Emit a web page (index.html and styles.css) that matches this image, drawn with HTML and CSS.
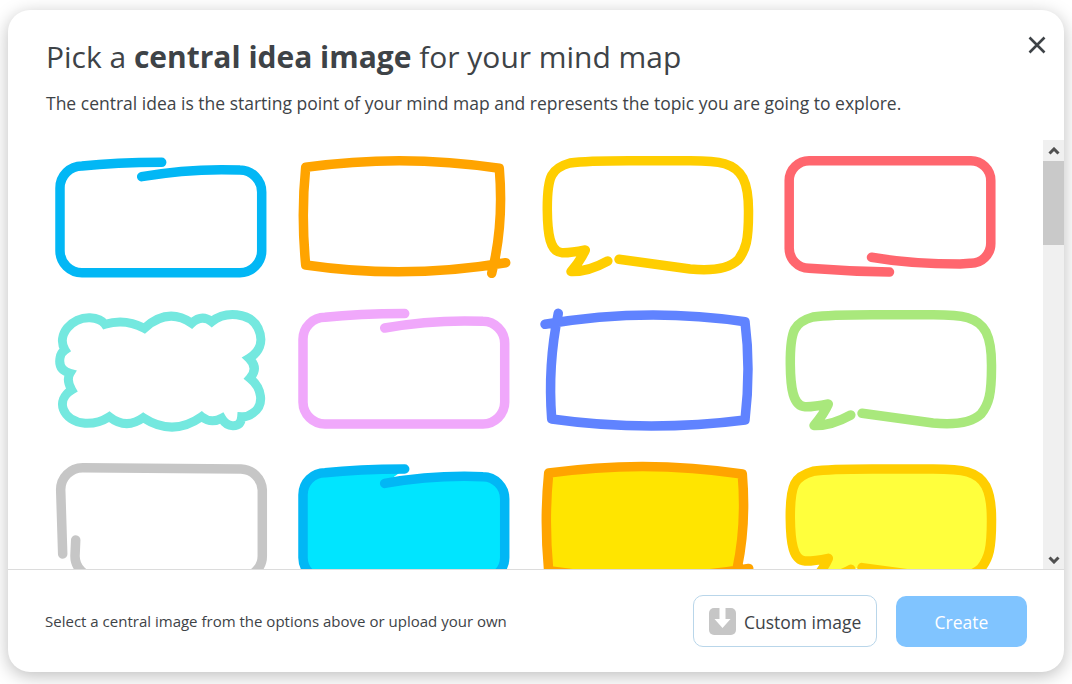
FILE: index.html
```html
<!DOCTYPE html>
<html lang="en">
<head>
<meta charset="utf-8">
<title>Pick a central idea image</title>
<link rel="stylesheet" href="styles.css">
</head>
<body>
<div class="dialog">
  <header class="head">
    <h1 class="title">Pick a <strong>central idea image</strong> for your mind map</h1>
    <p class="lead">The central idea is the starting point of your mind map and represents the topic you are going to explore.</p>
    <button class="close" aria-label="Close">
      <svg viewBox="0 0 20 20" width="20" height="20"><path d="M2.5 2.5L17.5 17.5M17.5 2.5L2.5 17.5"/></svg>
    </button>
  </header>
  <div class="picker">
    <div class="scroller">
      <div class="grid">
        <svg class="shape" viewBox="46 150 242 154"><path class="s-blue" d="M161.7 162.3Q115 162.5 82 166A22 22 0 0 0 60 188L60 251A22 22 0 0 0 82 272.7L240 272.7A22 22 0 0 0 261.7 251L261.7 192A22 22 0 0 0 240 170Q190 168 141.7 176.7"/></svg>
        <svg class="shape" viewBox="288 150 242 154"><path class="s-orange" d="M305.7 167.3Q403 153.6 499.3 168.3Q504 225 491.7 273.3M505.7 262.7Q405 279.6 305.7 265Q300.9 215 305.7 167.3"/></svg>
        <svg class="shape" viewBox="530 150 242 154"><path class="s-yellow" d="M607.8 261Q588 272 571 271.5Q581 260 585.3 250Q570 253 562 252.7C550 252 547.5 235 547.3 210C547 175 552 168 570 163C590 160 620 160.7 650 160.7L690 160.7C720 160.7 735 163 743 178C749 190 748.5 205 748.5 213C748.5 240 746 250 738 260C725 272 700 270 690 269L619 259.3"/></svg>
        <svg class="shape" viewBox="772 150 242 154"><path class="s-red" d="M871.5 257.3Q910 264 960 264L970 263.3A20 20 0 0 0 990.8 243L990.8 181A20 20 0 0 0 970 160.7L810 160.7A20 20 0 0 0 789.2 181L789.2 248A20 20 0 0 0 809 268.3Q850 271.5 889.5 272"/></svg>

        <svg class="shape" viewBox="46 304 242 154"><path class="s-teal" d="M65 350C56 335 72 317 90 317.7C96 318 102 320 105 324.3Q125 318 144.3 328.3Q168 307 191.7 323.3Q201.7 314 211.7 321.7C225 311 250 312 258 328C265 343 258 353 249 358.3Q259 368 250 378.3C262 388 265 405 253 413Q248 417 241.7 416.7Q241 426 232.7 425.7Q226 425.7 221.7 418.3Q211 424 201.7 416.7Q173 437 143.3 417.7Q126 430 109.3 416.7Q98 424 85 423.3C62 421 55 400 71.7 390Q66 380 70 373.3Q58 370 60 358Q60.5 353 65 350Z"/></svg>
        <svg class="shape" viewBox="288 304 242 154"><path class="s-pink" d="M404.7 313.6Q358 313.8 325 317.3A22 22 0 0 0 303 339.3L303 402.3A22 22 0 0 0 325 424L483 424A22 22 0 0 0 504.7 402.3L504.7 343.3A22 22 0 0 0 483 321.3Q433 319.3 384.7 328"/></svg>
        <svg class="shape" viewBox="530 304 242 154"><path class="s-indigo" d="M545 324.3Q645 307 745 321.7Q751 368 745 420Q647 432.5 551.7 419Q547.6 365 558.3 313.3"/></svg>
        <svg class="shape" viewBox="772 304 242 154"><path class="s-green" d="M850.8 415Q831 426 814 425.5Q824 414 828.3 404Q813 407 805 406.7C793 406 790.5 389 790.3 364C790 329 795 322 813 317C833 314 863 314.7 893 314.7L933 314.7C963 314.7 978 317 986 332C992 344 991.5 359 991.5 367C991.5 394 989 404 981 414C968 426 943 424 933 423L862 413.3"/></svg>

        <svg class="shape" viewBox="46 458 242 154"><path class="s-gray" d="M62.7 554L60.7 490A22 22 0 0 1 82.7 467.7L241 469A22 22 0 0 1 262.3 490L262.3 556A21 21 0 0 1 241 577L96 577A21 21 0 0 1 75 556L75.7 540"/></svg>
        <svg class="shape" viewBox="288 458 242 154"><path class="s-cyan" d="M404.7 469Q358 469.2 325 472.7A22 22 0 0 0 303 494.7L303 557.7A22 22 0 0 0 325 579.4L483 579.4A22 22 0 0 0 504.7 557.7L504.7 498.7A22 22 0 0 0 483 476.7Q433 474.7 384.7 483.4"/></svg>
        <svg class="shape" viewBox="530 458 242 154"><path class="f-gold" d="M548.7 473Q646 459.3 742.3 474Q747 530.7 737 570Q648 585.3 548.7 570.7Q543.9 520.7 548.7 473Z"/><path class="s-amber" d="M548.7 473Q646 459.3 742.3 474Q747 530.7 734.7 579M748.7 568.4Q648 585.3 548.7 570.7Q543.9 520.7 548.7 473"/></svg>
        <svg class="shape" viewBox="772 458 242 154"><path class="s-lemon" d="M850.8 569.3Q831 580.3 814 579.8Q824 568.3 828.3 558.3Q813 561.3 805 561C793 560.3 790.5 543.3 790.3 518.3C790 483.3 795 476.3 813 471.3C833 468.3 863 469 893 469L933 469C963 469 978 471.3 986 486.3C992 498.3 991.5 513.3 991.5 521.3C991.5 548.3 989 558.3 981 568.3C968 580.3 943 578.3 933 577.3L862 567.6"/></svg>
      </div>
    </div>
    <div class="scrollbar" aria-hidden="true">
      <div class="arrow">
        <svg viewBox="0 0 12 8" width="12" height="8"><path d="M1.5 6.5L6 2L10.5 6.5"/></svg>
      </div>
      <div class="track"><div class="thumb"></div></div>
      <div class="arrow arrow-down">
        <svg viewBox="0 0 12 8" width="12" height="8"><path d="M1.5 1.5L6 6L10.5 1.5"/></svg>
      </div>
    </div>
  </div>
  <footer class="foot">
    <span class="hint">Select a central image from the options above or upload your own</span>
    <div class="actions">
      <button class="btn-custom">
        <svg class="upload" viewBox="0 0 27 27" width="27" height="27"><rect width="27" height="27" rx="5"/><path d="M10.5 0H16.5V11H21.5L13.5 20L5.5 11H10.5Z"/></svg>
        <span class="btn-label">Custom image</span>
      </button>
      <button class="btn-create"><span class="btn-label">Create</span></button>
    </div>
  </footer>
</div>
</body>
</html>
```
FILE: styles.css
```css
* { box-sizing: border-box; }
html, body { height: 100%; }
body {
  margin: 0;
  padding: 10px 8px 12px;
  background: #fff;
  font-family: "Open Sans", "Liberation Sans", sans-serif;
  color: #3e4347;
  overflow: hidden;
}
.dialog {
  display: flex;
  flex-direction: column;
  height: 662px;
  background: #fff;
  border-radius: 22px;
  box-shadow: 0 4px 18px rgba(0, 0, 0, .26);
  overflow: hidden;
}
.head {
  position: relative;
  height: 130px;
  padding: 26px 38px 0;
}
.title {
  margin: 0;
  font-size: 29.98px;
  line-height: 42px;
  font-weight: 400;
}
.title strong { font-weight: 700; }
.lead {
  margin: 13px 0 0;
  font-size: 17.5px;
  line-height: 24px;
  white-space: nowrap;
}
.close {
  position: absolute;
  top: 25px;
  right: 17px;
  width: 20px;
  height: 20px;
  padding: 0;
  border: 0;
  background: none;
}
.close svg { display: block; fill: none; stroke: #3e4347; stroke-width: 2.6; }
.picker {
  display: flex;
  height: 429px;
}
.scroller {
  flex: 1;
  overflow: hidden;
  padding: 10px 0 0 38px;
}
.grid {
  display: grid;
  grid-template-columns: repeat(4, 242px);
  grid-auto-rows: 154px;
}
.shape {
  display: block;
  width: 242px;
  height: 154px;
  overflow: visible;
  fill: none;
  stroke-width: 9.5;
  stroke-linecap: round;
  stroke-linejoin: round;
}
.s-blue { stroke: #02b7f5; }
.s-orange { stroke: #ffa400; }
.s-yellow { stroke: #ffce00; }
.s-red { stroke: #ff666e; }
.s-teal { stroke: #74e8df; stroke-width: 9; stroke-linejoin: miter; }
.s-pink { stroke: #f0a8fb; }
.s-indigo { stroke: #6083ff; }
.s-green { stroke: #a9e87c; }
.s-gray { stroke: #c6c6c6; }
.s-cyan { stroke: #02b7f5; fill: #00e5ff; }
.f-gold { fill: #ffe500; stroke: none; }
.s-amber { stroke: #ffa400; }
.s-lemon { stroke: #ffce00; fill: #ffff3c; }
.scrollbar {
  display: flex;
  flex-direction: column;
  width: 21px;
  background: #f0f0f0;
}
.arrow {
  display: flex;
  align-items: center;
  justify-content: center;
  height: 21px;
}
.arrow-down { padding-top: 3px; }
.arrow svg { fill: none; stroke: #505050; stroke-width: 3; }
.track { flex: 1; }
.thumb { height: 84px; background: #c9c9c9; }
.foot {
  display: flex;
  flex: 1;
  align-items: center;
  justify-content: space-between;
  padding: 0 37px 0 37px;
  border-top: 1px solid #dcdcdc;
}
.hint { font-size: 15.03px; }
.actions { display: flex; align-items: center; gap: 19px; }
.btn-custom {
  display: flex;
  align-items: center;
  gap: 8px;
  width: 184px;
  height: 52px;
  padding: 0 0 0 15px;
  border: 1px solid #b9d6ea;
  border-radius: 10px;
  background: #fff;
  color: #3e4347;
  font: 400 17.5px "Open Sans", sans-serif;
}
.btn-label { display: inline-block; padding-top: 1px; }
.upload { flex: none; }
.upload rect { fill: #c6c6c6; }
.upload path { fill: #fff; }
.btn-create {
  width: 131px;
  height: 51px;
  border: 0;
  border-radius: 10px;
  background: #80c4ff;
  color: #fff;
  font: 400 17.5px "Open Sans", sans-serif;
}
```
